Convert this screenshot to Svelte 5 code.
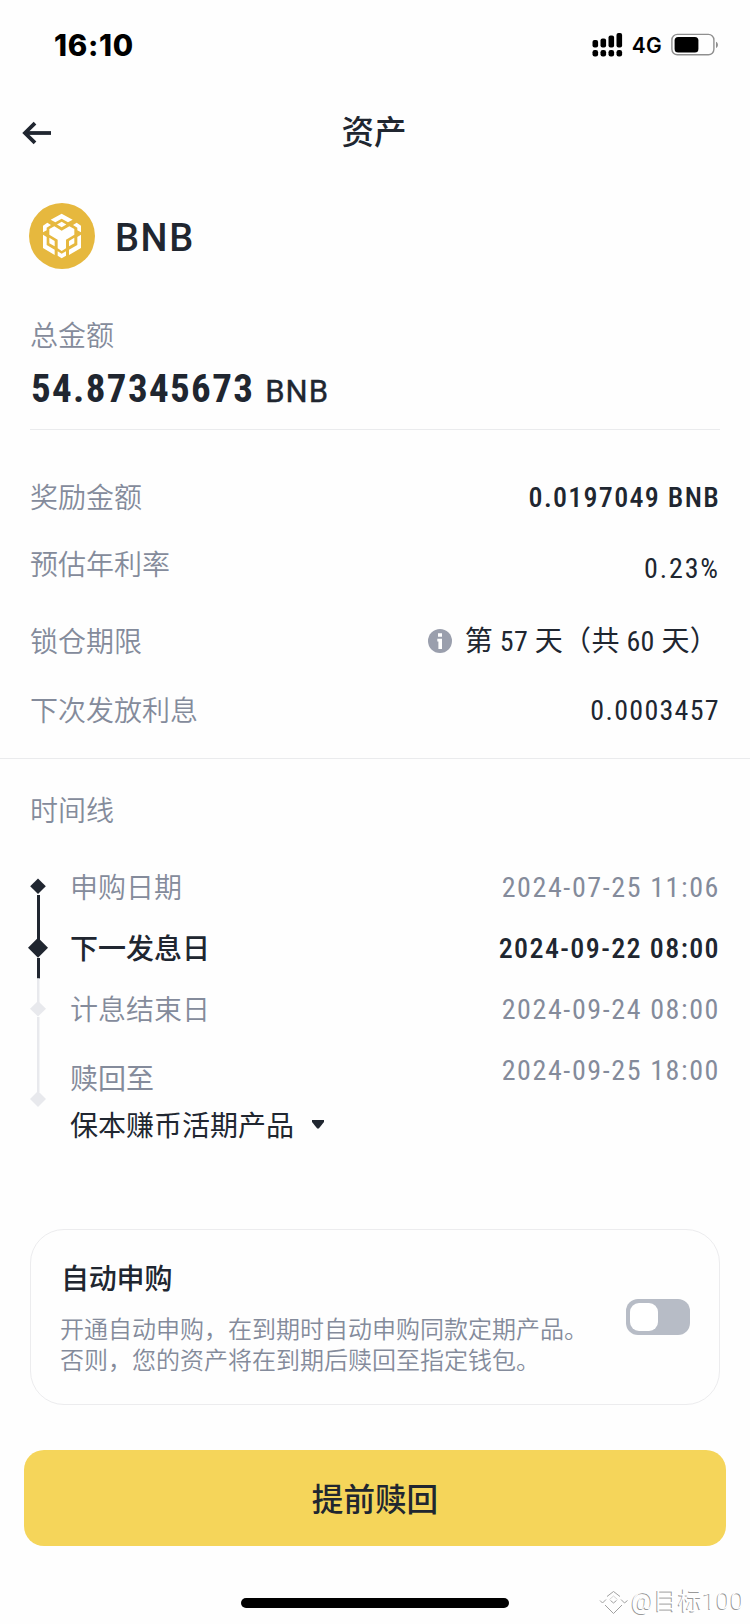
<script>
  const details = [
    { label: '奖励金额', value: '0.0197049 BNB', kind: 'reward' },
    { label: '预估年利率', value: '0.23%', kind: 'rate' },
    { label: '锁仓期限', value: '第 57 天（共 60 天）', kind: 'term' },
    { label: '下次发放利息', value: '0.0003457', kind: 'interest' }
  ];
  const steps = [
    { label: '申购日期', date: '2024-07-25 11:06', kind: 'past' },
    { label: '下一发息日', date: '2024-09-22 08:00', kind: 'current' },
    { label: '计息结束日', date: '2024-09-24 08:00', kind: 'next' },
    { label: '赎回至', date: '2024-09-25 18:00', kind: 'last' }
  ];
  let auto = $state(false);
</script>

<div class="screen">
  <div class="status">
    <span class="time">16:10</span>
    <div class="indicators">
      <svg class="signal" width="32" height="26" viewBox="0 0 32 26">
        <rect x="0.5" y="8" width="5.6" height="7.6" rx="2" />
        <rect x="8.5" y="6.5" width="5.6" height="9" rx="2" />
        <rect x="16.5" y="3.5" width="5.6" height="12" rx="2" />
        <rect x="24.5" y="1" width="5.6" height="14.6" rx="2" />
        <rect x="0.5" y="18" width="5.6" height="6.4" rx="2.2" />
        <rect x="8.5" y="18" width="5.6" height="6.4" rx="2.2" />
        <rect x="16.5" y="18" width="5.6" height="6.4" rx="2.2" />
        <rect x="24.5" y="18" width="5.6" height="6.4" rx="2.2" />
      </svg>
      <span class="network">4G</span>
      <svg class="battery" width="48" height="24" viewBox="0 0 48 24">
        <rect x="0.9" y="1.4" width="42" height="20.4" rx="5.5" fill="none" stroke="#8f8f8f" stroke-width="1.4" />
        <rect x="3.6" y="4" width="23.8" height="15.6" rx="3.5" />
        <path d="M45 8.7c2.6 1 2.6 5.200 0 6.200z" fill="#8f8f8f" />
      </svg>
    </div>
  </div>

  <header>
    <svg class="back" width="30" height="24" viewBox="0 0 30 24" fill="none" stroke="#202630" stroke-width="3.8">
      <path d="M29 12H3" />
      <path d="M13 2.200L3 12l10 9.800" />
    </svg>
    <h1>资产</h1>
  </header>

  <div class="coin">
    <svg width="66" height="66" viewBox="87 609 198 198">
      <circle cx="186" cy="708" r="99" fill="#e6b83e" />
      <g fill="#fff">
        <path d="M185 641L218 659L204 667L185 656L166 667L152 659Z" />
        <path d="M185 665L199 673.500L185 682L171 673.500Z" />
        <path d="M129 677L142 668L153 675L140 683V691L129 697Z" />
        <path d="M243 677L230 668L219 675L232 683V691L243 697Z" />
        <path d="M148 687L163 679L185 692L208 679L223 687V704L198 719V745L185 753L173 745V719L148 704Z" />
        <path d="M148 713L164 723V739L148 730Z" />
        <path d="M223 713L207 723V739L223 730Z" />
        <path d="M129 704L140 711V735L164 749V765L129 744Z" />
        <path d="M243 704L232 711V735L207 749V765L243 744Z" />
        <path d="M173 754L185 761L198 754V767L185 775L173 767Z" />
      </g>
    </svg>
    <span>BNB</span>
  </div>

  <section class="total">
    <div class="label">总金额</div>
    <div class="amount"><strong>54.87345673</strong><span>BNB</span></div>
  </section>

  <section class="details">
    {#each details as d}
      <div class="detail {d.kind}">
        <span class="label">{d.label}</span>
        <span class="value">
          {#if d.kind === 'term'}
            <svg width="24" height="24" viewBox="0 0 24 24">
              <circle cx="12" cy="12" r="12" fill="#9a9fad" />
              <path d="M10 4.300h4v3.500h-4zM9.300 9.700H14V20h-3.600v-7.400H9.300z" fill="#fff" />
            </svg>
          {/if}
          <span>{d.value}</span>
        </span>
      </div>
    {/each}
  </section>

  <section class="timeline">
    <h2 class="label">时间线</h2>
    <div class="track">
      <svg width="20" height="230" viewBox="0 0 20 230">
        <g fill="#202630">
          <path d="M10 3.500L17.800 11.300L10 19.100L2.200 11.300Z" />
          <path d="M9 20h3v46H9zM9 83h3v20.500H9z" />
          <path d="M10 62.800L20 72.800L10 82.800L0 72.800Z" />
        </g>
        <g fill="#e8e9ed">
          <path d="M9 103.500h2.500V128H9zM9 142h2.500v75H9z" />
          <path d="M10 126L18 133.700L10 141.400L2 133.700Z" />
          <path d="M10 216L18 224L10 232L2 224Z" />
        </g>
      </svg>
      <div class="steps">
        {#each steps as s}
          <div class="step {s.kind}">
            <span class="name">{s.label}</span>
            <time>{s.date}</time>
          </div>
        {/each}
        <div class="product">
          <span>保本赚币活期产品</span>
          <svg width="12" height="9" viewBox="0 0 12 9"><path d="M0 0h12v2L6.800 8.500H5.200L0 2z" fill="#202630" /></svg>
        </div>
      </div>
    </div>
  </section>

  <section class="card">
    <div class="copy">
      <h3>自动申购</h3>
      <p>开通自动申购，在到期时自动申购同款定期产品。<br />否则，您的资产将在到期后赎回至指定钱包。</p>
    </div>
    <button class="toggle" class:on={auto} aria-label="自动申购" onclick={() => (auto = !auto)}><i></i></button>
  </section>

  <button class="redeem">提前赎回</button>

  <footer>
    <div class="home"></div>
    <div class="mark">
      <svg width="30" height="26" viewBox="0 0 30 26" fill="none">
        <g stroke="#a0a0a0" stroke-width="1">
          <path d="M8 6.500L14.500 1.500L21 6.500" />
          <path d="M1 10.500L3.500 13L7 9.500M22 9.500L25.500 13L28.500 10.500" />
          <path d="M11.500 10.500L14.500 13L17.500 10.500" />
          <path d="M10.500 9.500L14.500 6L18.500 9.500" stroke="#d5d5d5" />
          <path d="M6 15L14.500 23.500L23 15" />
        </g>
      </svg>
      <span>@目标100</span>
    </div>
  </footer>
</div>

<style>
  :global(body) { margin: 0; background: #fefefe; }
  * { box-sizing: border-box; }
  h1, h2, h3, p { margin: 0; font-weight: 400; }
  button { border: 0; padding: 0; font-family: inherit; }
  svg { display: block; flex: none; }
  .screen {
    width: 750px; height: 1624px; overflow: hidden;
    display: flex; flex-direction: column;
    color: #202630; background: #fefefe;
    font-family: Roboto, 'Noto Sans CJK SC', sans-serif; font-size: 28px;
  }
  .status {
    height: 90px; padding: 0 31px 0 54px; color: #000; flex: none;
    display: flex; align-items: center; justify-content: space-between;
    font-family: Inter, sans-serif;
  }
  .time { font-size: 29.500px; font-weight: 800; line-height: 40px; letter-spacing: 0.7px; }
  .indicators { display: flex; align-items: center; }
  .network { font-size: 21px; font-weight: 600; line-height: 30px; margin: 2px 9px 0 8px; letter-spacing: 0.3px; }
  header {
    height: 84px; flex: none; padding: 0 22px;
    display: grid; grid-template-columns: 60px 1fr 60px; align-items: center;
  }
  .back { margin-top: 1px; }
  h1 { font: 500 32.500px/48px 'Noto Sans CJK SC', sans-serif; text-align: center; margin: -4px 2px 0 0; }
  .coin { height: 124px; flex: none; padding: 0 29px; display: flex; align-items: center; gap: 20px; }
  .coin span { font-size: 38px; font-weight: 500; line-height: 48px; margin-top: 4px; letter-spacing: 1.6px; }
  .label, .name, .product { font-family: 'Noto Sans CJK SC', sans-serif; }
  .label { color: #848b9b; font-size: 28px; font-weight: 350; line-height: 40px; }
  .total { height: 132px; margin: 0 30px; padding-top: 16px; border-bottom: 1px solid #eaebed; flex: none; }
  .amount { display: flex; align-items: baseline; gap: 11px; line-height: 50px; margin-top: 10px; padding-left: 1px; }
  .amount strong { font-size: 39px; font-weight: 700; font-stretch: 85%; letter-spacing: 1.35px; }
  .amount span { font-size: 31px; font-weight: 400; letter-spacing: 1px; -webkit-text-stroke: 0.4px; }
  .value, .step time { font-stretch: 85%; letter-spacing: 1.3px; margin-right: -1px; }
  .details { height: 329px; padding: 46px 31px 0 30px; border-bottom: 1px solid #eaebed; flex: none; }
  .detail { display: flex; justify-content: space-between; align-items: flex-start; height: 67px; }
  .value { display: flex; align-items: center; gap: 13px; line-height: 44px; white-space: nowrap; }
  .reward .value { font-weight: 500; }
  .rate .value { margin-top: 4px; letter-spacing: 1.9px; }
  .rate { height: 77px; }
  .term { height: 69px; }
  .term .value { letter-spacing: 0.3px; margin-right: 1px; }
  .term .value svg { margin-top: -2px; }
  .timeline { height: 470px; padding: 30px 31px 0 28px; flex: none; }
  .timeline h2 { padding-left: 2px; }
  .track { display: flex; margin-top: 45px; gap: 22px; }
  .track > svg { overflow: visible; margin-top: 1px; }
  .steps { flex: 1; }
  .step { display: flex; justify-content: space-between; height: 61px; line-height: 24px; color: #848b9b; }
  .name { font-weight: 350; }
  .step time { line-height: 28px; letter-spacing: 1.6px; }
  .step.current { color: #202630; }
  .current .name, .current time { font-weight: 500; }
  .step.current time { letter-spacing: 1.4px; }
  .last { height: 56px; }
  .last .name { margin-top: 8px; font-weight: 400; }
  .product { display: flex; align-items: center; gap: 18px; line-height: 24px; height: 24px; margin-top: -1px; }
  .card {
    width: 690px; height: 176px; margin: 0 0 0 30px; padding: 30px 29px 0 30px; flex: none;
    border: 1px solid #ececee; border-radius: 34px; display: flex; justify-content: space-between;
  }
  .copy h3 { font-size: 28px; font-weight: 500; line-height: 40px; letter-spacing: -0.2px; }
  .copy p { color: #848b9b; font-size: 24px; font-weight: 350; line-height: 31px; margin: 15px 0 0 -1px; white-space: nowrap; }
  .toggle { width: 64px; height: 36px; margin-top: 39px; padding: 4px; border-radius: 12px; background: #b7bcc6; flex: none; }
  .toggle i { display: block; width: 28px; height: 28px; border-radius: 9px; background: #fff; }
  .toggle.on { background: #f0b90b; }
  .toggle.on i { margin-left: 28px; }
  .redeem {
    width: 702px; height: 96px; margin: 45px 0 0 24px; border-radius: 20px; flex: none; padding-bottom: 2px;
    background: #f5d55a; color: #202630; font: 500 31.600px/48px 'Noto Sans CJK SC', sans-serif;
  }
  footer { position: relative; flex: 1; padding-top: 52px; }
  .home { width: 268px; height: 10px; border-radius: 5px; background: #000; margin-left: 241px; }
  .mark {
    position: absolute; right: 6px; top: 36px; display: flex; align-items: center; gap: 2px; height: 38px;
    color: #fff; font: 350 24px/38px Roboto, 'Noto Sans CJK SC', sans-serif; letter-spacing: 0.5px;
  }
  .mark svg { margin-top: 4px; }
  .mark span { text-shadow: -1px 0.7px 0.5px #999; }
</style>
